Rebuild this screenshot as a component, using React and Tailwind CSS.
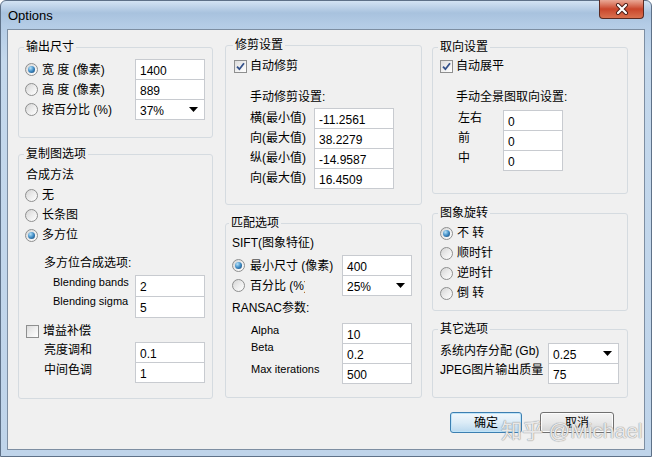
import React from "react";

const Radio = ({ on }) => (
  <span className="w-[13px] h-[13px] shrink-0 rounded-full border border-[#8e8f8f] bg-linear-to-br from-[#d4d4d4] via-[#ececec] to-[#ffffff] flex items-center justify-center">
    {on && (
      <span className="w-[7px] h-[7px] rounded-full bg-radial-[at_35%_30%] from-[#b4e2fa] via-[#3f8bc4] to-[#163e68]" />
    )}
  </span>
);

const Check = ({ on }) => (
  <span className="w-[13px] h-[13px] shrink-0 border border-[#8e8f8f] bg-linear-to-br from-[#dcdcdc] via-[#efefef] to-[#ffffff] flex items-center justify-center">
    {on && (
      <svg width="9" height="9" viewBox="0 0 9 9">
        <path d="M1 4.6 L3.4 7.2 L8 1.2" stroke="#33518a" strokeWidth="1.8" fill="none" />
      </svg>
    )}
  </span>
);

const Field = ({ value, className = "", drop }) => (
  <div
    className={`h-[21px] flex items-center justify-between bg-white border border-[#c8cbd0] pl-[4px] pr-[6px] text-[12px] ${className}`}
  >
    <span className="leading-none pt-[2px]">{value}</span>
    {drop && (
      <svg width="9" height="5" viewBox="0 0 9 5">
        <path d="M0 0h9L4.5 5z" fill="#000" />
      </svg>
    )}
  </div>
);

const Group = ({ title, className = "", legend = "ml-[5px]", children }) => (
  <fieldset className={`border border-[#d5dbe0] rounded-[3px] ${className}`}>
    <legend className={`px-[2px] leading-[16px] ${legend}`}>{title}</legend>
    {children}
  </fieldset>
);

const RadioRow = ({ on, label }) => (
  <div className="h-[20px] flex items-center gap-[4px]">
    <Radio on={on} />
    <span>{label}</span>
  </div>
);

const Button = ({ label, primary, className = "" }) => (
  <div
    className={`h-[21px] rounded-[3px] border flex items-center justify-center text-[12px] ${
      primary
        ? "border-[#3c7fb1] bg-linear-to-b from-[#f2f8fc] via-[#dcecf7] to-[#b9d8ee] shadow-[inset_0_0_0_1px_#bfe4f9]"
        : "border-[#707070] bg-linear-to-b from-[#f3f3f3] via-[#e8e8e8] to-[#d2d2d2] shadow-[inset_0_0_0_1px_#fcfcfc]"
    } ${className}`}
  >
    {label}
  </div>
);

export default function App() {
  return (
    <div className="relative w-[652px] h-[457px] flex flex-col rounded-t-[6px] border border-[#5e7188] bg-[linear-gradient(to_bottom,#d3e3f3_0px,#a8c2de_12px,#b4cce6_24px,#c4d8ec_60px,#bfd4ea_100%)] text-[12px] text-black font-['Liberation_Sans','Noto_Sans_CJK_SC',sans-serif]">
      {/* title bar */}
      <div className="h-[28px] flex items-start justify-between pl-[7px] pr-[7px]">
        <span className="text-[13px] leading-[28px] pt-[1px]">Options</span>
        <div className="w-[45px] h-[19px] -mt-px rounded-b-[4px] border border-t-0 border-[#5a2a22] bg-linear-to-b from-[#e9a896] via-[#c9452b] to-[#d9704f] flex items-center justify-center">
          <svg width="14" height="12" viewBox="0 0 14 12">
            <path d="M3 2 L11 10 M11 2 L3 10" stroke="#4a1c16" strokeWidth="4" strokeLinecap="round" />
            <path d="M3 2 L11 10 M11 2 L3 10" stroke="#ffffff" strokeWidth="2.2" strokeLinecap="round" />
          </svg>
        </div>
      </div>

      {/* client area */}
      <div className="mx-[6px] h-[421px] border border-[#7d8ea2] bg-[#f0f0f0] flex flex-col">
        <div className="flex items-start pl-[10px]">
          {/* column 1 */}
          <div className="w-[195px] mt-[9px] flex flex-col">
            <Group title="输出尺寸" className="h-[99px]">
              <div className="mt-[4px] pl-[6px] pr-[7px] flex flex-col -space-y-px">
                {[
                  ["宽 度 (像素)", "1400", true, false],
                  ["高 度 (像素)", "889", false, false],
                  ["按百分比 (%)", "37%", false, true],
                ].map(([label, value, on, drop]) => (
                  <div key={label} className="flex items-center">
                    <div className="w-[110px] flex items-center gap-[4px]">
                      <Radio on={on} />
                      <span>{label}</span>
                    </div>
                    <Field value={value} drop={drop} className="w-[70px] h-[20px]" />
                  </div>
                ))}
              </div>
            </Group>

            <Group title="复制图选项" className="h-[253px] mt-[8px]">
              <div className="pl-[6px] pr-[7px]">
                <div className="mt-[3px] h-[20px] flex items-center pl-[1px]">合成方法</div>
                <RadioRow label="无" />
                <RadioRow label="长条图" />
                <RadioRow on label="多方位" />
                <div className="mt-[8px] h-[20px] flex items-center pl-[19px]">多方位合成选项:</div>
                <div className="flex items-start">
                  <div className="w-[110px] pl-[28px] text-[11px] leading-[19px]">
                    <div>Blending bands</div>
                    <div>Blending sigma</div>
                  </div>
                  <div className="mt-[2px] flex flex-col -space-y-px">
                    <Field value="2" className="w-[70px] h-[22px]" />
                    <Field value="5" className="w-[70px] h-[22px]" />
                  </div>
                </div>
                <div className="mt-[4px] h-[18px] flex items-center gap-[4px] pl-px">
                  <Check />
                  <span>增益补偿</span>
                </div>
                <div className="flex items-start">
                  <div className="w-[110px] pl-[19px] leading-[20px]">
                    <div>亮度调和</div>
                    <div>中间色调</div>
                  </div>
                  <div className="mt-[2px] flex flex-col -space-y-px">
                    <Field value="0.1" className="w-[70px]" />
                    <Field value="1" className="w-[70px]" />
                  </div>
                </div>
              </div>
            </Group>
          </div>

          {/* column 2 */}
          <div className="w-[197px] ml-[12px] mt-[7px] flex flex-col">
            <Group title="修剪设置" className="h-[168px]" legend="ml-[7px]">
              <div className="mt-[3px] h-[20px] flex items-center gap-[3px] pl-[8px]">
                <Check on />
                <span>自动修剪</span>
              </div>
              <div className="mt-[11px] h-[20px] flex items-center pl-[24px]">手动修剪设置:</div>
              <div className="mt-[1px] flex items-start">
                <div className="w-[88px] pl-[24px] leading-[20px]">
                  <div>横(最小值)</div>
                  <div>向(最大值)</div>
                  <div>纵(最小值)</div>
                  <div>向(最大值)</div>
                </div>
                <div className="flex flex-col -space-y-px">
                  <Field value="-11.2561" className="w-[80px]" />
                  <Field value="38.2279" className="w-[80px]" />
                  <Field value="-14.9587" className="w-[80px]" />
                  <Field value="16.4509" className="w-[80px]" />
                </div>
              </div>
            </Group>

            <Group title="匹配选项" className="h-[183px] mt-[10px]" legend="ml-[3px]">
              <div className="mt-[2px] h-[20px] flex items-center pl-[6px]">SIFT(图象特征)</div>
              <div className="mt-[2px] pl-[6px] flex flex-col -space-y-px">
                <div className="flex items-center">
                  <div className="w-[110px] flex items-center gap-[5px]">
                    <Radio on />
                    <span>最小尺寸 (像素)</span>
                  </div>
                  <Field value="400" className="w-[70px]" />
                </div>
                <div className="flex items-center">
                  <div className="w-[110px] flex items-center gap-[5px]">
                    <Radio />
                    <span className="w-[55px] overflow-hidden whitespace-nowrap">百分比 (%)</span>
                  </div>
                  <Field value="25%" drop className="w-[70px]" />
                </div>
              </div>
              <div className="mt-[2px] h-[20px] flex items-center pl-[6px]">RANSAC参数:</div>
              <div className="flex items-start">
                <div className="w-[116px] pl-[25px] mt-[4px] text-[11px]">
                  <div className="leading-[16px]">Alpha</div>
                  <div className="leading-[18px]">Beta</div>
                  <div className="leading-[26px]">Max iterations</div>
                </div>
                <div className="mt-[5px] flex flex-col -space-y-px">
                  <Field value="10" className="w-[70px]" />
                  <Field value="0.2" className="w-[70px]" />
                  <Field value="500" className="w-[70px]" />
                </div>
              </div>
            </Group>
          </div>

          {/* column 3 */}
          <div className="w-[196px] ml-[10px] mt-[9px] flex flex-col">
            <Group title="取向设置" className="h-[155px]">
              <div className="mt-[1px] h-[20px] flex items-center gap-[3px] pl-[7px]">
                <Check on />
                <span>自动展平</span>
              </div>
              <div className="mt-[11px] h-[20px] flex items-center pl-[23px]">手动全景图取向设置:</div>
              <div className="flex items-start">
                <div className="w-[70px] pl-[25px] mt-[1px] leading-[20px]">
                  <div>左右</div>
                  <div>前</div>
                  <div>中</div>
                </div>
                <div className="mt-[3px] flex flex-col -space-y-px">
                  <Field value="0" className="w-[60px]" />
                  <Field value="0" className="w-[60px]" />
                  <Field value="0" className="w-[60px]" />
                </div>
              </div>
            </Group>

            <Group title="图象旋转" className="h-[106px] mt-[11px]">
              <div className="mt-[2px] pl-[7px]">
                <RadioRow on label="不 转" />
                <RadioRow label="顺时针" />
                <RadioRow label="逆时针" />
                <RadioRow label="倒 转" />
              </div>
            </Group>

            <Group title="其它选项" className="h-[77px] mt-[10px]">
              <div className="flex items-start">
                <div className="w-[115px] pl-[7px] mt-[5px] leading-[19px]">
                  <div>系统内存分配 (Gb)</div>
                  <div>JPEG图片输出质量</div>
                </div>
                <div className="mt-[6px] flex flex-col -space-y-px">
                  <Field value="0.25" drop className="w-[71px]" />
                  <Field value="75" className="w-[71px]" />
                </div>
              </div>
            </Group>
          </div>
        </div>

        {/* buttons */}
        <div className="mt-[13px] flex justify-end gap-[18px] pr-[30px]">
          <Button primary label="确定" className="w-[72px]" />
          <Button label="取消" className="w-[74px]" />
        </div>
      </div>

      {/* watermark */}
      <div className="absolute left-[500px] top-[417px] text-[21px] leading-[26px] text-white/80 [text-shadow:0_0_1px_#8a8a8a,0_0_1px_#8a8a8a] whitespace-nowrap">
        知乎 @Michael
      </div>
    </div>
  );
}
